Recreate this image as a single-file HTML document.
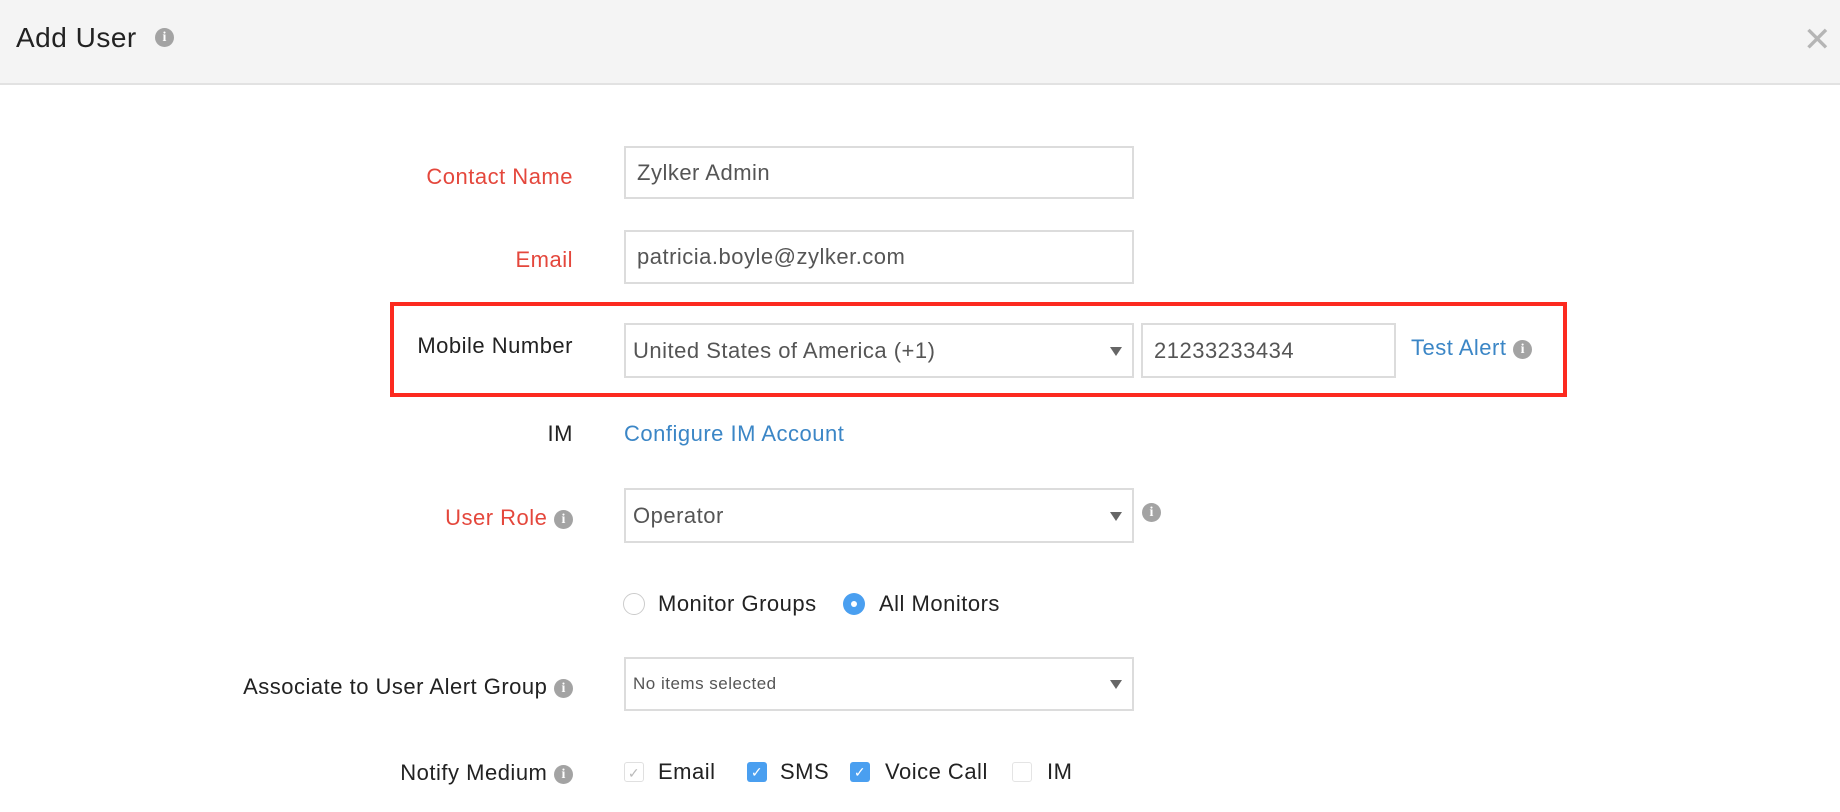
<!DOCTYPE html>
<html><head><meta charset="utf-8"><style>
*{box-sizing:border-box;margin:0;padding:0}
body{width:1840px;height:812px;background:#fff;font-family:"Liberation Sans",sans-serif;position:relative;overflow:hidden;letter-spacing:.5px}
.hdr{position:absolute;left:0;top:0;width:1840px;height:85px;background:#f4f4f4;border-bottom:2px solid #e2e2e2}
.title{position:absolute;left:16px;top:22px;font-size:28px;color:#222}
.close{position:absolute;left:1803px;top:20px;font-size:34px;color:#b5b5b5;font-weight:300}
.ab{position:absolute}
.lbl{position:absolute;right:1267px;font-size:22px;color:#222;white-space:nowrap;transform:translateY(-50%)}
.red{color:#e4473c}
.inp{position:absolute;border:2px solid #dcdcdc;background:#fff;font-size:22px;color:#555;padding-left:11px;display:flex;align-items:center}
.sel{padding-left:7px}
.arr{position:absolute;right:10px;top:50%;margin-top:-4px;width:0;height:0;border-left:6px solid transparent;border-right:6px solid transparent;border-top:9px solid #666}
.info{display:inline-block;width:19px;height:19px;border-radius:50%;background:#a3a3a3;color:#fff;font-size:14px;font-weight:bold;text-align:center;line-height:19px;font-family:"Liberation Serif",serif;vertical-align:middle;letter-spacing:0}
.t{position:absolute;font-size:22px;color:#222;transform:translateY(-50%);white-space:nowrap}
.t.link{color:#3b86c6}
.cb{position:absolute;width:20px;height:20px;border-radius:3px;transform:translateY(-50%);color:#fff;font-size:14px;text-align:center;line-height:20px}
</style></head><body>
<div class="hdr"><div class="title">Add User <span class="info" style="margin-left:10px;margin-top:-4px">i</span></div><div class="close">✕</div></div>

<div class="lbl red" style="top:177px">Contact Name</div>
<div class="inp" style="left:624px;top:146px;width:510px;height:53px">Zylker Admin</div>

<div class="lbl red" style="top:260px">Email</div>
<div class="inp" style="left:624px;top:230px;width:510px;height:54px">patricia.boyle@zylker.com</div>

<div class="ab" style="left:390px;top:302px;width:1177px;height:95px;border:4px solid #fc2a1f"></div>
<div class="lbl" style="top:346px">Mobile Number</div>
<div class="inp sel" style="left:624px;top:323px;width:510px;height:55px">United States of America (+1)<div class="arr"></div></div>
<div class="inp" style="left:1141px;top:323px;width:255px;height:55px">21233233434</div>
<div class="t link" style="left:1411px;top:348px">Test Alert <span class="info">i</span></div>

<div class="lbl" style="top:434px">IM</div>
<div class="t link" style="left:624px;top:434px">Configure IM Account</div>

<div class="lbl red" style="top:518px">User Role <span class="info">i</span></div>
<div class="inp sel" style="left:624px;top:488px;width:510px;height:55px">Operator<div class="arr"></div></div>
<div class="ab" style="left:1142px;top:503px"><span class="info">i</span></div>

<div class="ab" style="left:623px;top:593px;width:22px;height:22px;border-radius:50%;border:1.5px solid #ccc"></div>
<div class="t" style="left:658px;top:604px">Monitor Groups</div>
<div class="ab" style="left:843px;top:593px;width:22px;height:22px;border-radius:50%;background:#4a9ff0"><div style="position:absolute;left:8px;top:8px;width:6px;height:6px;border-radius:50%;background:#fff"></div></div>
<div class="t" style="left:879px;top:604px">All Monitors</div>

<div class="lbl" style="top:687px">Associate to User Alert Group <span class="info">i</span></div>
<div class="inp sel" style="left:624px;top:657px;width:510px;height:54px;font-size:17px">No items selected<div class="arr"></div></div>

<div class="lbl" style="top:773px">Notify Medium <span class="info">i</span></div>
<div class="cb" style="left:624px;top:772px;border:1.5px solid #e0e0e0;color:#bbb">✓</div>
<div class="t" style="left:658px;top:772px">Email</div>
<div class="cb" style="left:747px;top:772px;background:#4a9ff0">✓</div>
<div class="t" style="left:780px;top:772px">SMS</div>
<div class="cb" style="left:850px;top:772px;background:#4a9ff0">✓</div>
<div class="t" style="left:885px;top:772px">Voice Call</div>
<div class="cb" style="left:1012px;top:772px;border:1.5px solid #e4e4e4"></div>
<div class="t" style="left:1047px;top:772px">IM</div>
</body></html>
